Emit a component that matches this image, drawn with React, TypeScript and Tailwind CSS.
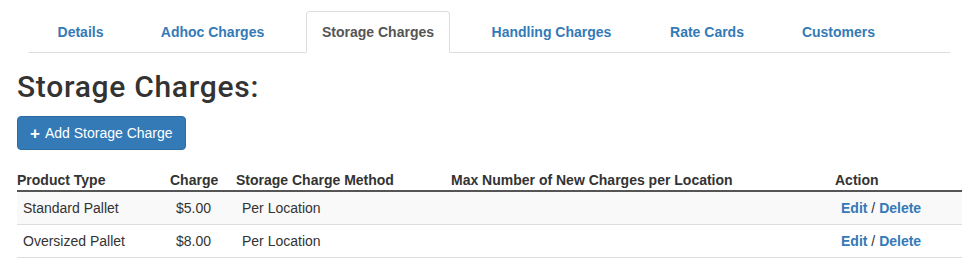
import React from "react";

const tabs = [
  { label: "Details", w: "w-[103px]" },
  { label: "Adhoc Charges", w: "w-[161px]" },
];
const tabsRight = [
  { label: "Handling Charges", w: "w-[203px]" },
  { label: "Rate Cards", w: "w-[108px]" },
  { label: "Customers", w: "w-[155px]" },
];

const rows = [
  { type: "Standard Pallet", charge: "$5.00", method: "Per Location", bg: "bg-[#f9f9f9]" },
  { type: "Oversized Pallet", charge: "$8.00", method: "Per Location", bg: "bg-white" },
];

export default function App() {
  return (
    <div
      className="w-[969px] h-[279px] bg-white text-[14px] text-[#333] overflow-hidden"
      style={{ fontFamily: '"Liberation Sans", Arial, sans-serif' }}
    >
      <ul className="flex ml-[29px] mt-[11px] w-[921px] border-b border-[#ddd] h-[42px]">
        {tabs.map((t) => (
          <li key={t.label} className={`${t.w} -mb-px`}>
            <a className="block text-center py-[10px] leading-[20px] border border-transparent font-bold text-[#337ab7]">
              {t.label}
            </a>
          </li>
        ))}
        <li className="w-[144px] ml-[13px] -mb-px">
          <a className="block text-center py-[10px] leading-[20px] border border-[#ddd] border-b-white rounded-t-[4px] bg-white font-bold text-[#555]">
            Storage Charges
          </a>
        </li>
        {tabsRight.map((t) => (
          <li key={t.label} className={`${t.w} -mb-px`}>
            <a className="block text-center py-[10px] leading-[20px] border border-transparent font-bold text-[#337ab7]">
              {t.label}
            </a>
          </li>
        ))}
      </ul>

      <div className="px-[17px]">
        <h2
          className="mt-[17px] text-[30px] leading-[33px] font-medium tracking-[0.7px] text-[#333]"
          style={{ fontFamily: 'Roboto, "Liberation Sans", Arial, sans-serif' }}
        >
          Storage Charges:
        </h2>
        <button className="mt-[13px] h-[34px] pl-[12px] pr-[12px] border border-[#2e6da4] rounded-[4px] bg-[#337ab7] text-white text-[14px] leading-[20px] flex items-center gap-[5px]">
          <span className="font-bold text-[17px] leading-none">+</span>
          <span>Add Storage Charge</span>
        </button>

        <div className="mt-[20px] w-[945px]">
          <div className="grid grid-cols-[153px_66px_215px_384px_127px] border-b-2 border-[#555] font-bold leading-[20px]">
            <div>Product Type</div>
            <div>Charge</div>
            <div>Storage Charge Method</div>
            <div>Max Number of New Charges per Location</div>
            <div>Action</div>
          </div>
          {rows.map((r) => (
            <div
              key={r.type}
              className={`grid grid-cols-[153px_66px_215px_384px_127px] border-b border-[#ddd] ${r.bg} leading-[20px]`}
            >
              <div className="py-[6px] pl-[6px]">{r.type}</div>
              <div className="py-[6px] pl-[6px]">{r.charge}</div>
              <div className="py-[6px] pl-[6px]">{r.method}</div>
              <div className="py-[6px] pl-[6px]"></div>
              <div className="py-[6px] pl-[6px]">
                <a className="font-bold text-[#337ab7]">Edit</a>
                <span> / </span>
                <a className="font-bold text-[#337ab7]">Delete</a>
              </div>
            </div>
          ))}
        </div>
      </div>
    </div>
  );
}
